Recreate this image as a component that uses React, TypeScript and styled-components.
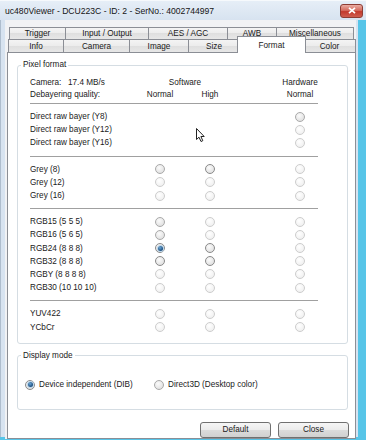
import React from 'react';
import styled, { createGlobalStyle } from 'styled-components';

type RadioState = 'off' | 'mid' | 'on' | 'sel';

interface FormatRow {
  label: string;
  n?: RadioState;
  h?: RadioState;
  hw?: RadioState;
}

const GlobalStyle = createGlobalStyle`
  * { box-sizing: border-box; }
  html, body { margin: 0; padding: 0; background: #57c5e8; }
  body {
    font-family: "Liberation Sans", Arial, sans-serif;
    font-size: 8.2px;
    color: #1a1a1a;
  }
`;

const Screen = styled.div`
  position: relative;
  width: 366px;
  height: 440px;
  background: #57c5e8;
  overflow: hidden;
`;

const TitleBar = styled.div`
  height: 20px;
  display: flex;
  align-items: center;
  justify-content: space-between;
  padding: 0 3px 0 5px;
  background: linear-gradient(#e6eef7, #d7e3f0);
  border-top: 1px solid #f6f9fc;
  font-size: 8.6px;
  color: #151515;
`;

const CloseButton = styled.div`
  width: 23px;
  height: 14px;
  display: flex;
  align-items: center;
  justify-content: center;
  border: 1px solid #8d3c33;
  border-radius: 3px;
  background: linear-gradient(#e9aca2, #d56c5f 45%, #c2392c 55%, #cf5d4f);
`;

const Frame = styled.div`
  width: 358px;
  height: 417px;
  display: flex;
  flex-direction: column;
  background: #d7e3f0;
  border-left: 1px solid #aebdcd;
  padding: 0 2px 4px 4px;
`;

const Client = styled.div`
  flex: 1;
  display: flex;
  flex-direction: column;
  background: #f1f2f4;
  padding: 7px 0 0 2px;
`;

const TabRow = styled.div<{ $indent: number; $front?: boolean }>`
  display: flex;
  align-items: flex-start;
  height: ${p => (p.$front ? 14 : 13)}px;
  margin-top: ${p => (p.$front ? -1 : 0)}px;
  padding-left: ${p => p.$indent}px;
`;

const Tab = styled.div<{ $w: number; $active?: boolean; $h: number }>`
  width: ${p => (p.$active ? p.$w + 4 : p.$w)}px;
  height: ${p => (p.$active ? p.$h + 3 : p.$h)}px;
  margin-top: ${p => (p.$active ? -3 : 0)}px;
  margin-left: ${p => (p.$active ? -3 : -1)}px;
  margin-right: ${p => (p.$active ? -2 : 0)}px;
  display: flex;
  align-items: center;
  justify-content: center;
  white-space: nowrap;
  border: 1px solid #8b8e95;
  border-bottom: ${p => (p.$active ? 'none' : '1px solid #8b8e95')};
  background: ${p =>
    p.$active ? '#ffffff' : 'linear-gradient(#f4f4f4, #ececec 50%, #dfdfdf 50%, #e7e7e7)'};
  position: relative;
  z-index: ${p => (p.$active ? 2 : 0)};

  &:first-child {
    margin-left: 0;
  }
`;

const Panel = styled.div`
  flex: 1;
  margin-top: -1px;
  display: flex;
  flex-direction: column;
  background: #ffffff;
  border: 1px solid #8b8e95;
  padding-top: 7px;
  position: relative;
  z-index: 1;
`;

const Group = styled.fieldset<{ $gap?: number }>`
  width: 331px;
  min-width: 0;
  margin: ${p => p.$gap ?? 0}px 0 0 9px;
  padding: 6px 0 3px 0;
  border: 1px solid #d5dde3;
  border-radius: 3px;
`;

const Legend = styled.legend`
  margin-left: 3px;
  padding: 0 2px;
  line-height: 10px;
`;

const Table = styled.div`
  margin-left: 12px;
`;

const Row = styled.div<{ $h?: number }>`
  display: grid;
  grid-template-columns: 118px 24px 26px 24px 66px 24px;
  height: ${p => p.$h ?? 13.2}px;
  align-items: center;
  white-space: nowrap;
`;

const Cell = styled.div<{ $col: string; $left?: boolean }>`
  grid-column: ${p => p.$col};
  display: flex;
  justify-content: ${p => (p.$left ? 'flex-start' : 'center')};
  white-space: nowrap;
`;

const Value = styled.span`
  display: inline-block;
  width: 38px;
`;

const Separator = styled.div<{ $top?: number }>`
  width: 288px;
  height: 1px;
  margin-top: ${p => p.$top ?? 0}px;
  background: #a0a0a0;
`;

const Section = styled.div`
  padding: 6px 0;
`;

const Radio = styled.span<{ $state: RadioState }>`
  width: 10px;
  height: 10px;
  border-radius: 50%;
  display: flex;
  align-items: center;
  justify-content: center;
  border: 1px solid
    ${p => (p.$state === 'off' ? '#cdcdcd' : p.$state === 'mid' ? '#a9a9a9' : '#8a8a8a')};
  background: ${p =>
    p.$state === 'off'
      ? 'radial-gradient(circle at 40% 35%, #ffffff, #ececec)'
      : 'radial-gradient(circle at 40% 35%, #fbfbfb, #d9d9d9)'};
`;

const Dot = styled.span`
  width: 5px;
  height: 5px;
  border-radius: 50%;
  background: radial-gradient(circle at 40% 35%, #6aa6d6, #1b4d7e 70%);
  box-shadow: 0 0 0 1px #bcd6ea;
`;

const ModeRow = styled.div`
  display: flex;
  align-items: center;
  height: 14px;
  padding: 11px 0 14px 7px;
  box-sizing: content-box;
`;

const ModeOption = styled.label<{ $w?: number }>`
  display: flex;
  align-items: center;
  gap: 4px;
  width: ${p => (p.$w ? `${p.$w}px` : 'auto')};
  white-space: nowrap;
`;

const ButtonRow = styled.div`
  display: flex;
  justify-content: flex-end;
  gap: 7px;
  margin-top: 12px;
  padding-right: 6px;
`;

const Button = styled.button`
  width: 71px;
  height: 16px;
  padding: 0;
  font: inherit;
  color: #1a1a1a;
  border: 1px solid #707070;
  border-radius: 3px;
  background: linear-gradient(#f6f6f6, #ebebeb 50%, #dcdcdc 50%, #d0d0d0);
`;

const Pointer = styled.svg`
  position: absolute;
  left: 195px;
  top: 127px;
  z-index: 5;
`;

const backTabs = [
  { label: 'Trigger', w: 57 },
  { label: 'Input / Output', w: 84 },
  { label: 'AES / AGC', w: 80 },
  { label: 'AWB', w: 50 },
  { label: 'Miscellaneous', w: 78 },
];

const frontTabs = [
  { label: 'Info', w: 56 },
  { label: 'Camera', w: 67 },
  { label: 'Image', w: 60 },
  { label: 'Size', w: 52 },
  { label: 'Format', w: 65, active: true },
  { label: 'Color', w: 53 },
];

const sections: FormatRow[][] = [
  [
    { label: 'Direct raw bayer (Y8)', hw: 'mid' },
    { label: 'Direct raw bayer (Y12)', hw: 'off' },
    { label: 'Direct raw bayer (Y16)', hw: 'off' },
  ],
  [
    { label: 'Grey (8)', n: 'mid', h: 'on', hw: 'off' },
    { label: 'Grey (12)', n: 'off', h: 'off', hw: 'off' },
    { label: 'Grey (16)', n: 'off', h: 'off', hw: 'off' },
  ],
  [
    { label: 'RGB15 (5 5 5)', n: 'mid', h: 'off', hw: 'off' },
    { label: 'RGB16 (5 6 5)', n: 'mid', h: 'off', hw: 'off' },
    { label: 'RGB24 (8 8 8)', n: 'sel', h: 'on', hw: 'off' },
    { label: 'RGB32 (8 8 8)', n: 'on', h: 'on', hw: 'off' },
    { label: 'RGBY (8 8 8 8)', n: 'off', h: 'off', hw: 'off' },
    { label: 'RGB30 (10 10 10)', n: 'off', h: 'off', hw: 'off' },
  ],
  [
    { label: 'YUV422', n: 'off', h: 'off', hw: 'off' },
    { label: 'YCbCr', n: 'off', h: 'off', hw: 'off' },
  ],
];

const RadioMark: React.FC<{ state?: RadioState; col: string }> = ({ state, col }) => {
  if (!state) return null;
  return (
    <Cell $col={col}>
      <Radio $state={state}>{state === 'sel' && <Dot />}</Radio>
    </Cell>
  );
};

const App: React.FC = () => {
  return (
    <Screen>
      <GlobalStyle />
      <TitleBar>
        <span>uc480Viewer - DCU223C - ID: 2 - SerNo.: 4002744997</span>
        <CloseButton>
          <svg width="8" height="7" viewBox="0 0 8 7">
            <path d="M1 0.8 L7 6.2 M7 0.8 L1 6.2" stroke="#ffffff" strokeWidth="1.7" />
          </svg>
        </CloseButton>
      </TitleBar>

      <Frame>
        <Client>
          <TabRow $indent={2}>
            {backTabs.map(t => (
              <Tab key={t.label} $w={t.w} $h={13}>{t.label}</Tab>
            ))}
          </TabRow>
          <TabRow $indent={1} $front>
            {frontTabs.map(t => (
              <Tab key={t.label} $w={t.w} $h={14} $active={t.active}>{t.label}</Tab>
            ))}
          </TabRow>

          <Panel>
            <Group>
              <Legend>Pixel format</Legend>
              <Table>
                <Row $h={12}>
                  <Cell $col="1" $left>
                    <Value>Camera:</Value>17.4 MB/s
                  </Cell>
                  <Cell $col="2 / 5">Software</Cell>
                  <Cell $col="6">Hardware</Cell>
                </Row>
                <Row $h={12}>
                  <Cell $col="1" $left>Debayering quality:</Cell>
                  <Cell $col="2">Normal</Cell>
                  <Cell $col="4">High</Cell>
                  <Cell $col="6">Normal</Cell>
                </Row>
                {sections.map((rows, i) => (
                  <React.Fragment key={i}>
                    <Separator $top={i === 0 ? 3 : 0} />
                    <Section>
                      {rows.map(r => (
                        <Row key={r.label}>
                          <span>{r.label}</span>
                          <RadioMark state={r.n} col="2" />
                          <RadioMark state={r.h} col="4" />
                          <RadioMark state={r.hw} col="6" />
                        </Row>
                      ))}
                    </Section>
                  </React.Fragment>
                ))}
              </Table>
            </Group>

            <Group $gap={7}>
              <Legend>Display mode</Legend>
              <ModeRow>
                <ModeOption $w={129}>
                  <Radio $state="on"><Dot /></Radio>
                  Device independent (DIB)
                </ModeOption>
                <ModeOption>
                  <Radio $state="mid" />
                  Direct3D (Desktop color)
                </ModeOption>
              </ModeRow>
            </Group>

            <ButtonRow>
              <Button>Default</Button>
              <Button>Close</Button>
            </ButtonRow>
          </Panel>
        </Client>
      </Frame>

      <Pointer width="11" height="16" viewBox="0 0 11 16">
        <path
          d="M1.5 1.5 L1.5 12.5 L4 10.2 L6 14.5 L7.8 13.7 L5.9 9.5 L9.2 9.5 Z"
          fill="#ffffff"
          stroke="#222222"
          strokeWidth="1"
          strokeLinejoin="round"
        />
      </Pointer>
    </Screen>
  );
};

export default App;
